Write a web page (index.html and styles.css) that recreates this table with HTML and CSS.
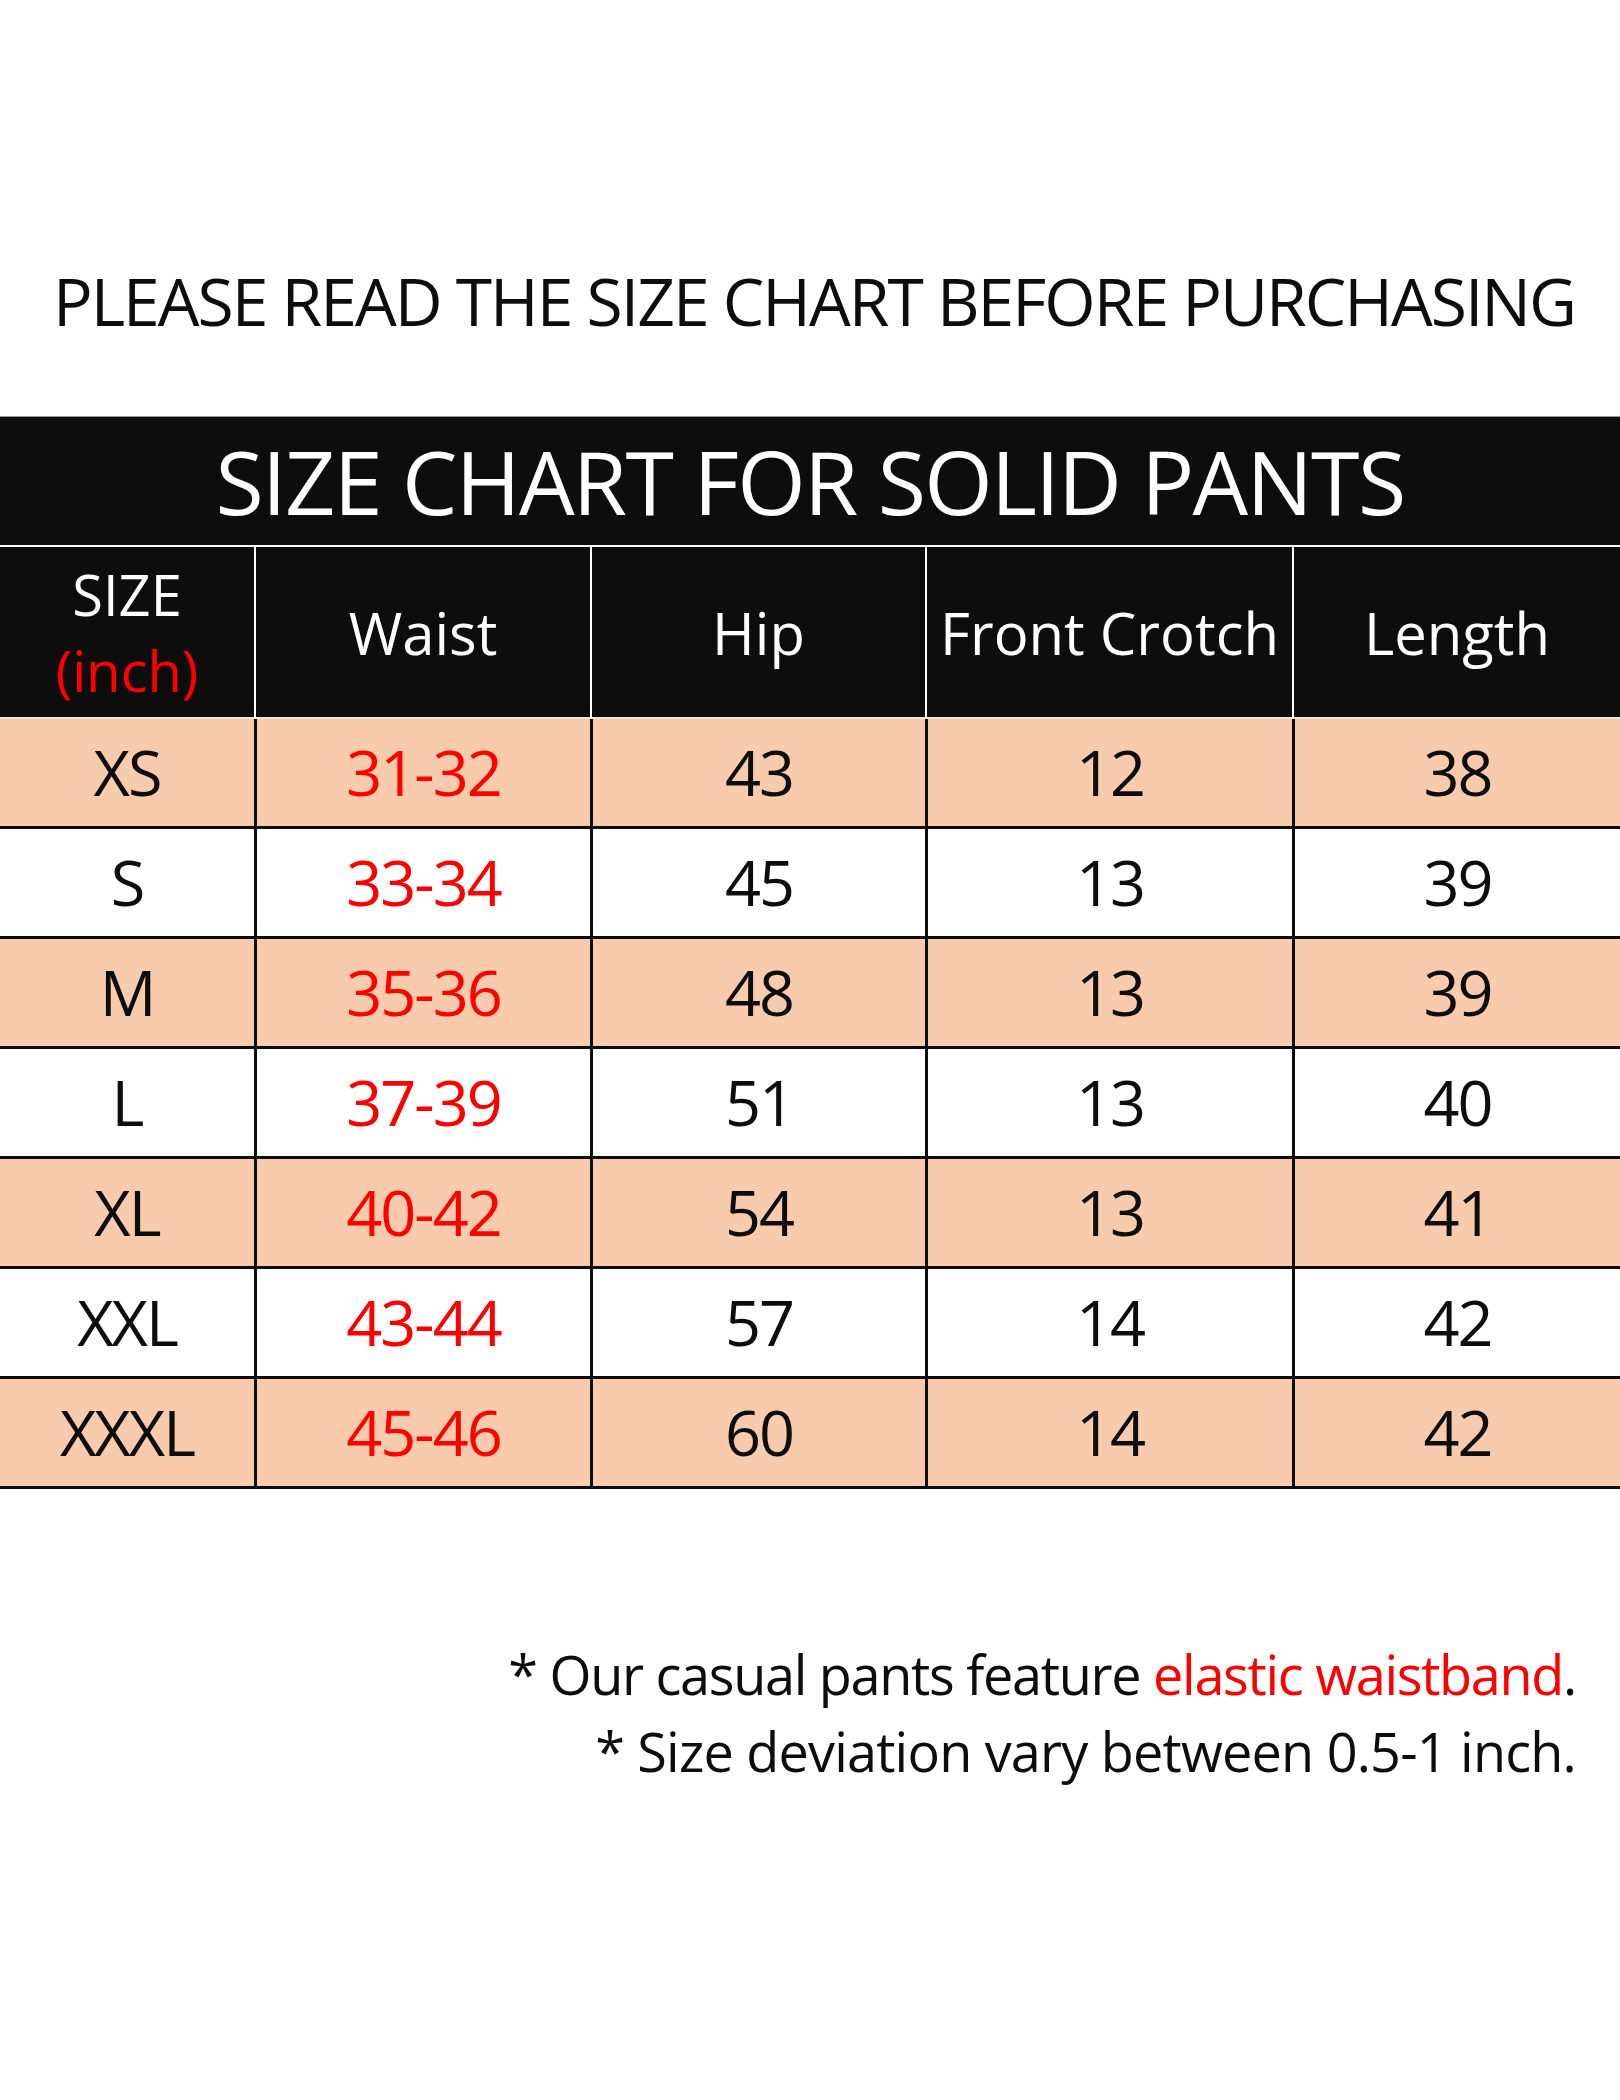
FILE: index.html
```html
<!DOCTYPE html>
<html>
<head>
<meta charset="utf-8">
<link rel="stylesheet" href="styles.css">
</head>
<body>
<div class="page">
  <div class="notice">PLEASE READ THE SIZE CHART BEFORE PURCHASING</div>
  <div class="chart">
    <div class="chart-title">SIZE CHART FOR SOLID PANTS</div>
    <div class="row head">
      <div class="cell first"><span class="size-lbl">SIZE</span><span class="unit">(inch)</span></div>
      <div class="cell">Waist</div>
      <div class="cell">Hip</div>
      <div class="cell">Front Crotch</div>
      <div class="cell">Length</div>
    </div>
    <div class="row body shade"><div class="cell first">XS</div><div class="cell red">31-32</div><div class="cell">43</div><div class="cell">12</div><div class="cell">38</div></div>
    <div class="row body"><div class="cell first">S</div><div class="cell red">33-34</div><div class="cell">45</div><div class="cell">13</div><div class="cell">39</div></div>
    <div class="row body shade"><div class="cell first">M</div><div class="cell red">35-36</div><div class="cell">48</div><div class="cell">13</div><div class="cell">39</div></div>
    <div class="row body"><div class="cell first">L</div><div class="cell red">37-39</div><div class="cell">51</div><div class="cell">13</div><div class="cell">40</div></div>
    <div class="row body shade"><div class="cell first">XL</div><div class="cell red">40-42</div><div class="cell">54</div><div class="cell">13</div><div class="cell">41</div></div>
    <div class="row body"><div class="cell first">XXL</div><div class="cell red">43-44</div><div class="cell">57</div><div class="cell">14</div><div class="cell">42</div></div>
    <div class="row body shade"><div class="cell first">XXXL</div><div class="cell red">45-46</div><div class="cell">60</div><div class="cell">14</div><div class="cell">42</div></div>
  </div>
  <div class="notes">
    <p>* Our casual pants feature <span class="hl">elastic waistband</span>.</p>
    <p class="second">* Size deviation vary between 0.5-1 inch.</p>
  </div>
</div>
</body>
</html>
```
FILE: styles.css
```css
html, body {
  margin: 0;
  padding: 0;
  background: #ffffff;
}
.page {
  width: 1620px;
  height: 2100px;
  font-family: "Open Sans", "Noto Sans", sans-serif;
  color: #0d0d0d;
}
.notice {
  height: 416px;
  box-sizing: border-box;
  padding-top: 255px;
  padding-left: 8px;
  text-align: center;
  font-size: 66px;
  line-height: 90px;
  letter-spacing: -2px;
}
.chart {
  width: 1620px;
}
.chart-title {
  height: 131px;
  background: #0d0d0d;
  border-top: 1px solid #9a9a9a;
  box-sizing: border-box;
  border-bottom: 2px solid #ffffff;
  color: #ffffff;
  text-align: center;
  font-size: 88px;
  line-height: 128px;
  letter-spacing: -1.7px;
}
.row {
  display: grid;
  grid-template-columns: 254px 336px 335px 367px 328px;
}
.cell {
  display: flex;
  align-items: center;
  justify-content: center;
  border-left: 3px solid #0d0d0d;
  box-sizing: border-box;
}
.cell.first {
  border-left: none;
}
.head {
  height: 172px;
  background: #0d0d0d;
  color: #ffffff;
  font-size: 58px;
}
.head .cell {
  border-left: 2px solid #ffffff;
  border-bottom: 2px solid #e8e8e8;
}
.head .cell.first {
  border-left: none;
  flex-direction: column;
  line-height: 76px;
  font-size: 56px;
}
.unit {
  color: #ff0000;
}
.body {
  height: 110px;
  font-size: 63px;
  letter-spacing: -2px;
  border-bottom: 3px solid #0d0d0d;
  box-sizing: border-box;
}
.body .cell {
  padding-bottom: 2px;
}
.shade {
  background: #f8cbad;
}
.red {
  color: #ff0000;
}
.notes {
  padding-top: 147px;
  padding-right: 44px;
  text-align: right;
  font-size: 54px;
  letter-spacing: -1.3px;
}
.notes p {
  margin: 0;
  line-height: 77px;
}
.notes .second {
  letter-spacing: -0.8px;
}
.hl {
  color: #ff0000;
}
```
